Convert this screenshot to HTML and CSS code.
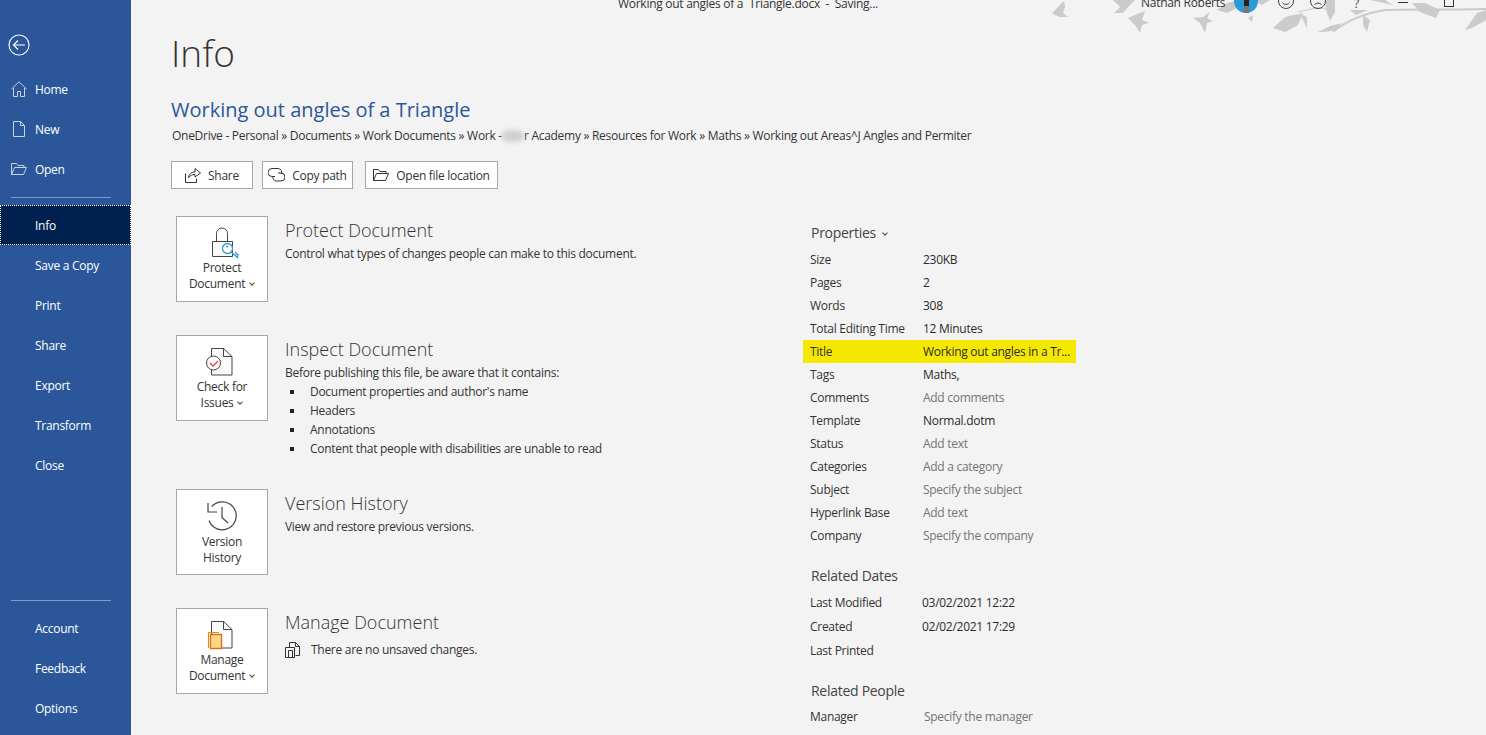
FILE: index.html
```html
<!DOCTYPE html>
<html lang="en">
<head>
    <meta charset="UTF-8">
    <title>Info - Working out angles of a Triangle.docx</title>
    <link rel="stylesheet" href="styles.css">
</head>
<body>

<div class="backstage">

    <nav class="sidebar">
        <button class="back-button">
            <svg width="22" height="22" viewBox="0 0 22 22" fill="none" stroke="#fff" stroke-width="1.1"><circle cx="11" cy="11" r="10"/><path d="M5.500 11H17M10 6.500L5.500 11l4.500 4.500"/></svg>
        </button>
        <a class="nav-item">
            <svg class="nav-icon" width="16" height="16" viewBox="0 0 16 16" fill="none" stroke="#c9d3e4"><path d="M.5 8L8 .8 15.500 8M2.500 7v8.500h4v-5h3v5h4V7"/></svg>
            Home
        </a>
        <a class="nav-item">
            <svg class="nav-icon" width="16" height="16" viewBox="0 0 16 16" fill="none" stroke="#c9d3e4"><path d="M2.500.5h7l4 4v11h-11zM9.500.5v4h4"/></svg>
            New
        </a>
        <a class="nav-item">
            <svg class="nav-icon" width="16" height="16" viewBox="0 0 16 16" fill="none" stroke="#c9d3e4"><path d="M.5 13.500v-11h5l1.500 2h6v2M.5 13.500l3-7h12l-3 7z"/></svg>
            Open
        </a>
        <div class="nav-divider first"></div>
        <a class="nav-item active">Info</a>
        <a class="nav-item">Save a Copy</a>
        <a class="nav-item">Print</a>
        <a class="nav-item">Share</a>
        <a class="nav-item">Export</a>
        <a class="nav-item">Transform</a>
        <a class="nav-item">Close</a>
        <div class="nav-spacer"></div>
        <div class="nav-divider last"></div>
        <a class="nav-item">Account</a>
        <a class="nav-item">Feedback</a>
        <a class="nav-item">Options</a>
    </nav>

    <main class="content">

        <!-- birds and branches of the office theme -->
        <svg class="theme-art" width="446" height="36" viewBox="0 0 446 36" fill="#cbcbcb">
            <path d="M12 13l8-8 4-4 1 6-2 6 5 4h-8l-5-2z"/>
            <path d="M73 0h22l-5 5-7 8h-9l6-6z"/>
            <path d="M88 18l12-5 5-2-3 9 7 3-7 2-2 8-5-8z"/>
            <path d="M153 18l10-1 7-5-3 6 6 3-6 2-2 10-5-10z"/>
            <path d="M177 10l10-7 13-3-3 8-10 5z"/>
            <path d="M213 0h17l-8 5z"/>
            <path d="M208 18l5-3-1 7z"/>
            <path d="M233 28l12-11 18-4-5 12-13 7z"/>
            <path d="M260 14l7 3v11z"/>
            <path d="M285 0h10v12l-5 9-4-11z"/>
            <path d="M278 32l12-6 12-3-6 7-11 2z"/>
            <path d="M310 10h18l-12 5z"/>
            <path d="M323 15l7 5-3 12-4-7z"/>
            <path d="M330 0h15l8 5z"/>
            <path d="M372 3h13l15 7-4 8-16-6z"/>
            <path d="M425 30l12-17 9-3v10l-14 8z"/>
            <path d="M293 32C305 22 320 14 345 10c25-1 65 0 101-1" fill="none" stroke="#cbcbcb" stroke-width="2"/>
            <path d="M258 12l18-4 10 1" fill="none" stroke="#cbcbcb"/>
        </svg>

        <header class="titlebar">
            <span class="doc-name">Working out angles of a &nbsp;Triangle.docx &nbsp;- &nbsp;Saving...</span>
            <span class="user-name">Nathan Roberts</span>
            <span class="avatar"><span class="avatar-figure"></span></span>
            <svg class="bar-icon smile" width="16" height="16" viewBox="0 0 16 16" fill="none" stroke="#444"><circle cx="8" cy="1" r="7.500"/><path d="M4.500 2.500c1 2.500 6 2.500 7 0"/><path d="M5.500-1v1M10.500-1v1"/></svg>
            <svg class="bar-icon frown" width="16" height="16" viewBox="0 0 16 16" fill="none" stroke="#444"><circle cx="8" cy="1" r="7.500"/><path d="M4.500 5c1-2.500 6-2.500 7 0"/><path d="M5.500-1v1M10.500-1v1"/></svg>
            <span class="help">?</span>
            <span class="minimize"></span>
            <span class="maximize"></span>
        </header>

        <h1>Info</h1>
        <h2 class="doc-title">Working out angles of a Triangle</h2>
        <p class="doc-path">OneDrive - Personal » Documents » Work Documents » Work -<span class="smudge"></span>r Academy » Resources for Work » Maths » Working out Areas^J Angles and Permiter</p>

        <div class="actions">
            <button class="action share">
                <svg width="16" height="16" viewBox="0 0 16 16" fill="none" stroke="#333"><path d="M.5 6.500v9h11v-4M3.500 11c0-4 3-6 6.500-6V1.500L15.500 6 10 10V7.500c-3 0-5 1-6.500 3.500z"/></svg>
                Share
            </button>
            <button class="action copy">
                <svg width="17" height="16" viewBox="0 0 17 16" fill="none" stroke="#333"><path d="M7 9.500H4a4 4 0 0 1 0-8h6a4 4 0 0 1 3.500 5.500"/><path d="M10 6h3a4 4 0 0 1 0 8H8a4 4 0 0 1-3-5"/></svg>
                Copy path
            </button>
            <button class="action open">
                <svg width="16" height="16" viewBox="0 0 16 16" fill="none" stroke="#333"><path d="M.5 13.500v-11h5l1.500 2h6v2M.5 13.500l3-7h12l-3 7z"/></svg>
                Open file location
            </button>
        </div>

        <div class="columns">

            <div class="sections">
                <section class="section protect">
                    <button class="big-button">
                        <svg width="32" height="32" viewBox="0 0 32 32" fill="none"><path d="M10.500 16V8.500a5.500 5.500 0 0 1 11 0V16" stroke="#444"/><path d="M6.500 16.500h20v15h-20z" fill="#fbfbfb" stroke="#444"/><circle cx="21.500" cy="23.500" r="5" fill="#fff" stroke="#2f9bd8" stroke-width="1.300"/><path d="M25 27l6.500 5.500.5-3-2-.5-.5-2M20 21.500h2" fill="none" stroke="#2f9bd8" stroke-width="1.300"/></svg>
                        <span>Protect<br>Document <i class="chevron"></i></span>
                    </button>
                    <div class="section-text">
                        <h3>Protect Document</h3>
                        <p>Control what types of changes people can make to this document.</p>
                    </div>
                </section>

                <section class="section inspect">
                    <button class="big-button">
                        <svg width="32" height="32" viewBox="0 0 32 32" fill="none"><path d="M5.500 4.500h12l8.500 8v18.500H5.500z" fill="#fbfbfb" stroke="#444"/><path d="M17.500 4.500v8H26" stroke="#444"/><circle cx="7.500" cy="19" r="7" fill="#fbfbfb" stroke="#444"/><path d="M4 19l3 3 5-5" stroke="#e8474f" stroke-width="1.300"/></svg>
                        <span>Check for<br>Issues <i class="chevron"></i></span>
                    </button>
                    <div class="section-text">
                        <h3>Inspect Document</h3>
                        <p>Before publishing this file, be aware that it contains:</p>
                        <ul>
                            <li>Document properties and author's name</li>
                            <li>Headers</li>
                            <li>Annotations</li>
                            <li>Content that people with disabilities are unable to read</li>
                        </ul>
                    </div>
                </section>

                <section class="section history">
                    <button class="big-button">
                        <svg width="32" height="32" viewBox="0 0 32 32" fill="none" stroke="#444" stroke-width="1.200"><path d="M5.700 8.500A14 14 0 1 1 3 22.500"/><path d="M2 5v9h9M16 9v10.500l6 5.500"/></svg>
                        <span>Version<br>History</span>
                    </button>
                    <div class="section-text">
                        <h3>Version History</h3>
                        <p>View and restore previous versions.</p>
                    </div>
                </section>

                <section class="section manage">
                    <button class="big-button">
                        <svg width="32" height="32" viewBox="0 0 32 32" fill="none"><path d="M5.500 4.500h12l8.500 8v18.500H5.500z" fill="#fbfbfb" stroke="#444"/><path d="M17.500 4.500v8H26" stroke="#444"/><path d="M2.500 31V15.500H13" stroke="#e8891c" stroke-width="1.200"/><path d="M4.500 17.500h11v14h-11z" fill="#fbd98b" stroke="#d9700f" stroke-width="1.300"/></svg>
                        <span>Manage<br>Document <i class="chevron"></i></span>
                    </button>
                    <div class="section-text">
                        <h3>Manage Document</h3>
                        <p class="no-changes">
                            <svg width="15" height="16" viewBox="0 0 15 16" fill="none" stroke="#333"><path d="M4.500 5V.5h6l4 4v9h-4M10.500.5v4h4M.5 5.500h9v10h-9zM3.500 8.500h4v7h-4z"/></svg>
                            There are no unsaved changes.
                        </p>
                    </div>
                </section>
            </div>

            <aside class="properties">
                <h4 class="prop-heading">Properties <i class="chevron"></i></h4>
                <div class="prop-row"><span>Size</span><span class="value">230KB</span></div>
                <div class="prop-row"><span>Pages</span><span class="value">2</span></div>
                <div class="prop-row"><span>Words</span><span class="value">308</span></div>
                <div class="prop-row"><span>Total Editing Time</span><span class="value">12 Minutes</span></div>
                <div class="prop-row highlight"><span>Title</span><span class="value">Working out angles in a Tr...</span></div>
                <div class="prop-row"><span>Tags</span><span class="value">Maths,</span></div>
                <div class="prop-row"><span>Comments</span><span class="hint">Add comments</span></div>
                <div class="prop-row"><span>Template</span><span class="value">Normal.dotm</span></div>
                <div class="prop-row"><span>Status</span><span class="hint">Add text</span></div>
                <div class="prop-row"><span>Categories</span><span class="hint">Add a category</span></div>
                <div class="prop-row"><span>Subject</span><span class="hint">Specify the subject</span></div>
                <div class="prop-row"><span>Hyperlink Base</span><span class="hint">Add text</span></div>
                <div class="prop-row"><span>Company</span><span class="hint">Specify the company</span></div>

                <h4 class="prop-heading dates">Related Dates</h4>
                <div class="date-row"><span>Last Modified</span><span class="value">03/02/2021 12:22</span></div>
                <div class="date-row"><span>Created</span><span class="value">02/02/2021 17:29</span></div>
                <div class="date-row"><span>Last Printed</span></div>

                <h4 class="prop-heading people">Related People</h4>
                <div class="date-row manager"><span>Manager</span><span class="hint">Specify the manager</span></div>
            </aside>

        </div>
    </main>

</div>

</body>
</html>
```

FILE: styles.css
```css
body {
    margin: 0;
    font-family: "Open Sans", "Noto Sans", sans-serif;
    font-size: 12px;
    letter-spacing: -0.28px;
    color: #333;
    background-color: #f3f3f3;
}

.backstage {
    display: flex;
    height: 735px;
    overflow: hidden;
}

/* left blue column */
.sidebar {
    width: 131px;
    flex-shrink: 0;
    display: flex;
    flex-direction: column;
    background-color: #2b579a;
    padding-bottom: 7px;
    box-sizing: border-box;
}

.back-button {
    width: 22px;
    height: 22px;
    margin: 34px 0 13px 8px;
    padding: 0;
    border: none;
    background: none;
}

.back-button svg {
    display: block;
}

.nav-item {
    height: 40px;
    flex-shrink: 0;
    display: flex;
    align-items: center;
    padding-left: 35px;
    position: relative;
    color: #fff;
    box-sizing: border-box;
}

.nav-icon {
    position: absolute;
    left: 11px;
    top: 12px;
}

.nav-item.active {
    background-color: #002050;
    border: 1px dotted #fff;
    padding-left: 34px;
}

.nav-divider {
    height: 1px;
    margin-left: 11px;
    width: 100px;
    background-color: #7f9cc6;
}

.nav-divider.first {
    margin-top: 8px;
    margin-bottom: 7px;
}

.nav-divider.last {
    margin-bottom: 7px;
}

.nav-spacer {
    flex: 1;
}

/* main area */
.content {
    flex: 1;
    position: relative;
    padding-left: 40px;
}

.theme-art {
    position: absolute;
    left: 909px;
    top: 0;
}

.titlebar {
    height: 14px;
    margin-left: -40px;
    display: flex;
    align-items: flex-end;
    overflow: hidden;
    position: relative;
    color: #333;
}

.doc-name {
    margin-left: 487px;
    margin-bottom: 2px;
    width: 523px;
    flex-shrink: 0;
    line-height: 16px;
    white-space: nowrap;
}

.user-name {
    width: 93px;
    flex-shrink: 0;
    line-height: 16px;
    margin-bottom: 3px;
    white-space: nowrap;
}

.avatar {
    width: 24px;
    height: 24px;
    flex-shrink: 0;
    border-radius: 50%;
    background-color: #2d9ad8;
    margin-bottom: 1px;
    display: flex;
    justify-content: center;
}

.avatar-figure {
    width: 5px;
    height: 24px;
    background: linear-gradient(#222 70%, #777 70%);
}

.bar-icon {
    flex-shrink: 0;
    margin-bottom: -2px;
    overflow: visible;
}

.smile {
    margin-left: 20px;
}

.frown {
    margin-left: 16px;
}

.help {
    width: 7px;
    flex-shrink: 0;
    margin-left: 28px;
    margin-bottom: 3px;
    line-height: 14px;
    color: #444;
}

.minimize {
    width: 10px;
    height: 1px;
    margin-left: 37px;
    margin-bottom: 11px;
    flex-shrink: 0;
    background-color: #333;
}

.maximize {
    width: 8px;
    height: 20px;
    margin-left: 36px;
    margin-bottom: 7px;
    flex-shrink: 0;
    border: 1px solid #333;
}

h1 {
    margin: 13px 0 0;
    font-size: 37px;
    line-height: 52px;
    font-weight: 300;
    color: #333;
    letter-spacing: 0;
}

.doc-title {
    margin: 17px 0 0;
    font-size: 20px;
    line-height: 28px;
    font-weight: 400;
    letter-spacing: 0;
    color: #2b579a;
}

.doc-path {
    margin: 3px 0 0 1px;
    line-height: 18px;
    white-space: nowrap;
}

.smudge {
    display: inline-block;
    width: 22px;
    height: 12px;
    vertical-align: -2px;
    background-color: #d0d0d0;
    border-radius: 6px;
    filter: blur(2px);
}

.actions {
    display: flex;
    margin-top: 16px;
}

.action {
    height: 28px;
    padding: 0;
    display: flex;
    align-items: center;
    justify-content: center;
    gap: 7px;
    font: inherit;
    letter-spacing: inherit;
    color: #333;
    background-color: #fff;
    border: 1px solid #a6a6a6;
    box-sizing: border-box;
}

.share { width: 82px; margin-right: 9px; }
.copy { width: 91px; margin-right: 12px; }
.open { width: 133px; }

.columns {
    display: flex;
    margin-top: 27px;
}

.sections {
    width: 632px;
    flex-shrink: 0;
    padding-left: 5px;
    box-sizing: border-box;
}

.section {
    display: flex;
    align-items: flex-start;
}

.protect { height: 119px; }
.inspect { height: 154px; }
.history { height: 119px; }

.big-button {
    width: 92px;
    height: 86px;
    flex-shrink: 0;
    padding: 8px 0 0;
    display: flex;
    flex-direction: column;
    align-items: center;
    font: inherit;
    letter-spacing: inherit;
    line-height: 16px;
    color: #333;
    background-color: #fff;
    border: 1px solid #a6a6a6;
    box-sizing: border-box;
}

.big-button svg {
    margin-bottom: 3px;
    flex-shrink: 0;
    overflow: visible;
}

.history .big-button svg {
    margin-bottom: 4px;
}

.chevron {
    display: inline-block;
    width: 3px;
    height: 3px;
    margin: 0 1px 3px 2px;
    border-right: 1px solid #444;
    border-bottom: 1px solid #444;
    transform: rotate(45deg);
}

.section-text {
    margin-left: 17px;
}

.section-text h3 {
    margin: 0;
    font-size: 18px;
    line-height: 28px;
    font-weight: 300;
    letter-spacing: 0;
    color: #333;
}

.section-text p {
    margin: 0;
    line-height: 19px;
}

.section-text ul {
    margin: 0;
    padding: 0 0 0 5px;
    list-style: none;
}

.section-text li {
    display: flex;
    align-items: center;
    line-height: 19px;
}

.section-text li::before {
    content: "";
    width: 4px;
    height: 4px;
    margin-right: 16px;
    background-color: #222;
}

.section-text .no-changes {
    display: flex;
    align-items: center;
    gap: 11px;
    margin-top: 4px;
}

/* properties on the right */
.properties {
    width: 273px;
}

.prop-heading {
    margin: 5px 0 3px 8px;
    font-size: 14px;
    line-height: 24px;
    font-weight: 400;
    color: #444;
}

.prop-heading .chevron {
    margin-left: 4px;
}

.prop-heading.dates {
    margin-top: 17px;
    margin-bottom: 3px;
}

.prop-heading.people {
    margin-top: 16px;
    margin-bottom: 2px;
}

.prop-row,
.date-row {
    display: flex;
    padding-left: 7px;
    line-height: 23px;
    white-space: nowrap;
}

.date-row {
    line-height: 24px;
}

.prop-row span:first-child,
.date-row span:first-child {
    width: 113px;
    flex-shrink: 0;
}

.date-row span:first-child {
    width: 112px;
}

.manager span:first-child {
    width: 114px;
}

.value {
    color: #2b2b2b;
}

.hint {
    color: #737373;
}

.highlight {
    background-color: #f5e800;
}
```
